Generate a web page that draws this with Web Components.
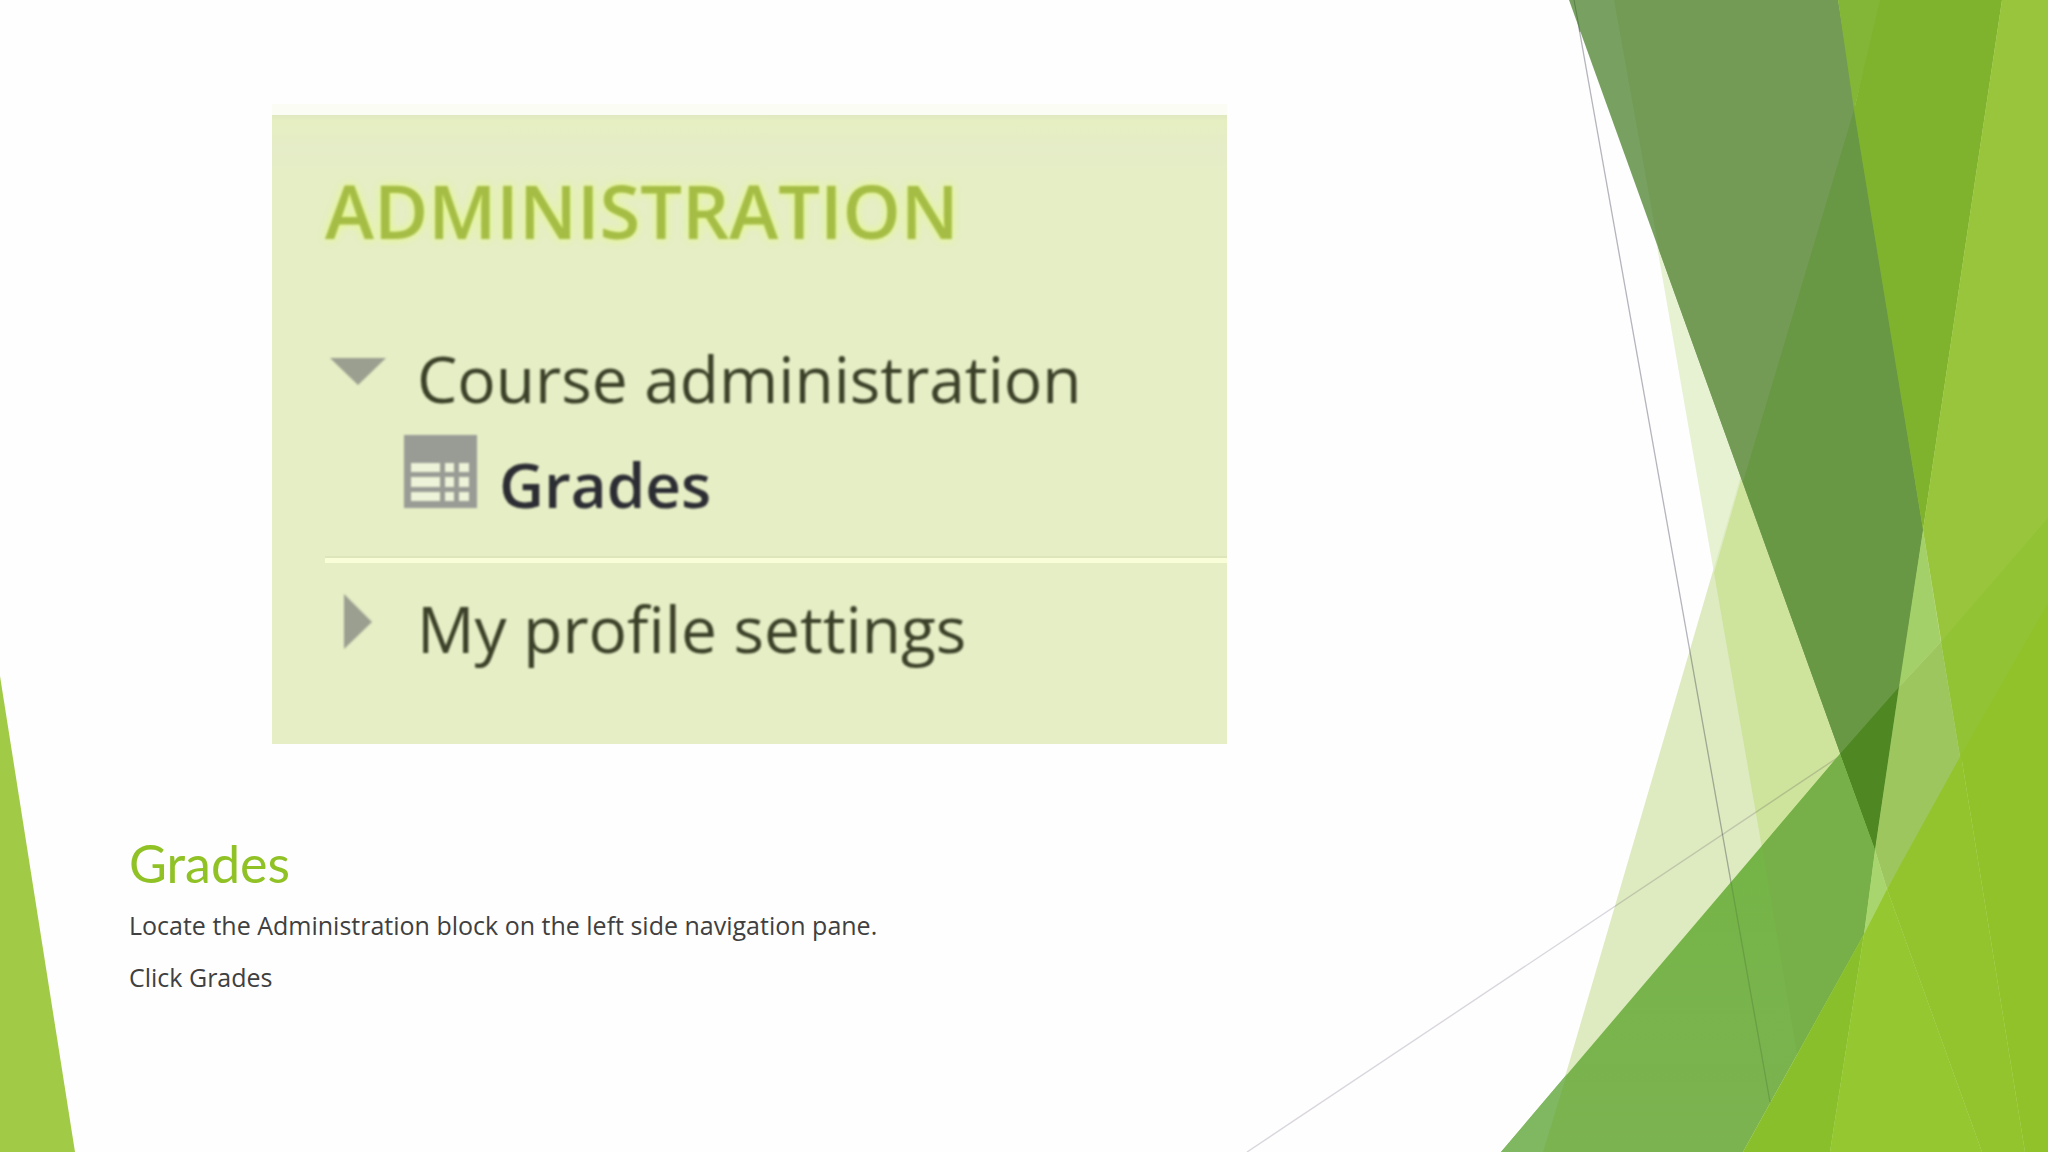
<!DOCTYPE html>
<html lang="en">
<head>
<meta charset="utf-8">
<title>Grades</title>
<style>
  body { margin: 0; background: #fefefe; }
</style>
</head>
<body>
<slide-page>
  <facet-backdrop slot="backdrop"></facet-backdrop>
  <admin-block heading="ADMINISTRATION">
    <tree-branch state="open">Course administration</tree-branch>
    <tree-leaf>Grades</tree-leaf>
    <tree-divider></tree-divider>
    <tree-branch state="closed">My profile settings</tree-branch>
  </admin-block>
  <slide-caption>
    <span slot="title">Grades</span>
    <p>Locate the Administration block on the left side navigation pane.</p>
    <p>Click Grades</p>
  </slide-caption>
</slide-page>
<script>
function define(name, html, setup) {
  const template = document.createElement('template');
  template.innerHTML = html;
  customElements.define(name, class extends HTMLElement {
    constructor() {
      super();
      this.attachShadow({ mode: 'open' }).append(template.content.cloneNode(true));
    }
    connectedCallback() { if (setup) setup(this); }
  });
}

define('slide-page', `
  <style>
    :host { display: block; position: relative; min-height: 100vh; overflow: hidden; box-sizing: border-box; }
    main { position: relative; display: flex; flex-direction: column; gap: 87px; padding: 104px 128px 80px; }
  </style>
  <slot name="backdrop"></slot>
  <main><slot></slot></main>`);

define('facet-backdrop', `
  <style>
    :host { display: block; position: absolute; inset: 0; }
    svg { display: block; width: 100%; height: 100%; }
  </style>
  <svg viewBox="0 0 2048 1152" preserveAspectRatio="none" aria-hidden="true">
    <defs>
      <linearGradient id="leaf" x1="0" y1="0" x2="0" y2="1">
        <stop offset="0" stop-color="#72b543"/><stop offset="1" stop-color="#7cb351"/>
      </linearGradient>
    </defs>
    <path fill="#a1cb47" d="M0 676L75 1152H0z"/>
    <!-- pale bands -->
    <path fill="#e7f2d3" d="M1614 0H2048V1152H1815z"/>
    <path fill="#deebc0" d="M1880 0H2048V1152H1543z"/>
    <path fill="#cee49c" d="M1714 573L1880 0H2048V1152H1815z"/>
    <!-- hairlines -->
    <path stroke="#0a0a28" stroke-opacity=".3" stroke-width="1.3" fill="none" d="M1574 0L1779 1152"/>
    <path stroke="#28103c" stroke-opacity=".17" stroke-width="1.4" fill="none" d="M1247 1152L1840 756"/>
    <!-- dark blade -->
    <path fill="#78a161" d="M1569 0H1838L1923 530L1875 850z"/>
    <path fill="#739b55" d="M1614 0H1838L1923 530L1875 850L1659 250z"/>
    <path fill="#689843" d="M1854 110L1923 530L1875 850L1743 482z"/>
    <path fill="#4f8723" d="M1840 754L1899 687L1875 850z"/>
    <path stroke="#3c6030" stroke-opacity=".5" fill="none" d="M1574 0L1580 32"/>
    <!-- lower leaf -->
    <path fill="url(#leaf)" d="M1501 1152L1840 754L1875 850L1864 934L1743 1152z"/>
    <path fill="#80b862" d="M1501 1152L1567 1074L1543 1152z"/>
    <path fill="#77b048" d="M1762 846L1840 754L1875 850L1864 934L1797 1054z"/>
    <path stroke="#3c6030" stroke-opacity=".25" stroke-width="1.3" fill="none" d="M1731 882L1770 1102"/>
    <!-- upper bright facets -->
    <path fill="#83b636" d="M1838 0H1882L1854 110z"/>
    <path fill="#80b32d" d="M1880 0H2002L1923 530L1854 110z"/>
    <path fill="#98c53c" d="M2002 0H2048V605L1961 762L1923 530z"/>
    <path fill="#92c334" d="M2048 518L1941 642L1961 762L2048 605z"/>
    <path fill="#a4d069" d="M1923 530L1941 642L1899 687z"/>
    <path fill="#9ec65f" d="M1899 687L1941 642L1961 762L1887 889L1875 850z"/>
    <path fill="#a9d56f" d="M1875 850L1887 889L1864 934z"/>
    <!-- corner facets -->
    <path fill="#89bf2b" d="M1743 1152L1864 934L1830 1152z"/>
    <path fill="#94c730" d="M1830 1152L1864 934L1887 889L1982 1152z"/>
    <path fill="#93c42e" d="M1887 889L1961 755L2025 1152H1982z"/>
    <path fill="#91c229" d="M1961 755L2048 603V1152H2025z"/>
  </svg>`);

define('admin-block', `
  <style>
    :host { display: block; width: 955px; max-width: 100%; margin-left: 144px; box-sizing: border-box;
      border-top: 11px solid #fbfcf3; font-family: "Open Sans", "Noto Sans", sans-serif; }
    nav { background: linear-gradient(#dfe8bf, #e6efc1 6px, #e5ecc8 32px, #e5eec5 60px);
      padding: 56px 0 75px 53px; }
    h2 { margin: 0 0 88px; font-size: 74px; line-height: 80px; font-weight: 600; color: #a6bd45;
      text-shadow: 0 0 8px #e4fb7c; filter: blur(1px); }
  </style>
  <nav><h2></h2><slot></slot></nav>`,
  el => { el.shadowRoot.querySelector('h2').textContent = el.getAttribute('heading'); });

define('tree-branch', `
  <style>
    :host { display: block; filter: blur(1px); }
    button { display: grid; grid-template-columns: 92px auto; align-items: start; padding: 0; border: 0;
      background: none; font: inherit; font-size: 64px; line-height: 80px; color: #3b4028; text-align: left; }
    svg { width: 90px; height: 80px; fill: #9b9f90; }
  </style>
  <button type="button">
    <svg viewBox="0 0 90 80" aria-hidden="true"><path/></svg>
    <span><slot></slot></span>
  </button>`,
  el => {
    const open = el.getAttribute('state') === 'open';
    el.shadowRoot.querySelector('button').setAttribute('aria-expanded', open);
    el.shadowRoot.querySelector('path').setAttribute('d', open ? 'M5 19H61L33 46z' : 'M19 5V60L47 33z');
  });

define('tree-leaf', `
  <style>
    :host { display: block; margin-top: 16px; padding-left: 79px; filter: blur(1px); }
    a { display: flex; align-items: baseline; gap: 22px; font-size: 62px; line-height: 80px; font-weight: 600;
      color: #2b2d33; text-decoration: none; }
    svg { width: 73px; height: 73px; }
  </style>
  <a href="#grades">
    <svg viewBox="0 0 73 73" aria-hidden="true">
      <path fill="#999c95" d="M0 0H73V73H0z"/>
      <path fill="#edf3d8" d="M7 28H36V37H7zM41 28H50V37H41zM55 28H65V37H55zM7 42H36V52H7zM41 42H50V52H41zM55 42H65V52H55zM7 57H36V66H7zM41 57H50V66H41zM55 57H65V66H55z"/>
    </svg>
    <span><slot></slot></span>
  </a>`);

define('tree-divider', `
  <style>
    :host { display: block; height: 5px; margin: 32px 0 26px; border-top: 2px solid #dde5bb; background: #fafed8; }
  </style>`);

define('slide-caption', `
  <style>
    :host { display: block; padding: 0 1px; color: #404040; }
    h1 { margin: 0 0 12px; font-family: Lato, sans-serif; font-size: 52px; line-height: 64px; font-weight: 400; color: #90c226; }
    div { display: flex; flex-direction: column; gap: 16px; font-family: "Open Sans", sans-serif;
      font-size: 25px; line-height: 36px; }
    ::slotted(p) { margin: 0; }
  </style>
  <h1><slot name="title"></slot></h1>
  <div><slot></slot></div>`);
</script>
</body>
</html>
